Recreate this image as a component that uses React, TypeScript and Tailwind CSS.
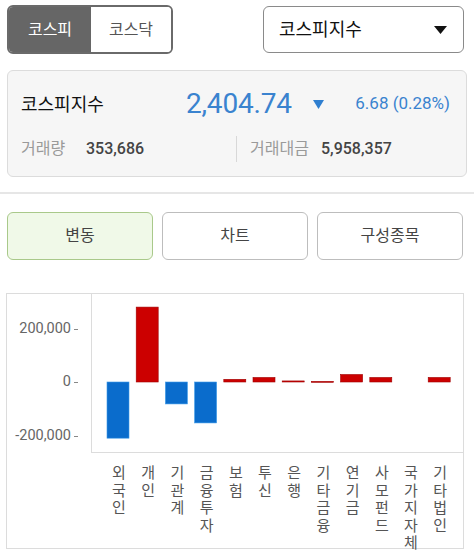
import React from 'react';

const bars = [
  { label: '외국인', value: -210000 },
  { label: '개인', value: 280000 },
  { label: '기관계', value: -82000 },
  { label: '금융투자', value: -153000 },
  { label: '보험', value: 10000 },
  { label: '투신', value: 17000 },
  { label: '은행', value: 4000 },
  { label: '기타금융', value: 2500 },
  { label: '연기금', value: 28000 },
  { label: '사모펀드', value: 17000 },
  { label: '국가지자체', value: 0 },
  { label: '기타법인', value: 17000 },
];

const ZERO = 88;
const SCALE = 53.5 / 200000;
const STEP = 29.2;
const FIRST = 26;
const BAR_W = 22;

function Chart() {
  return (
    <div className="mx-[6px] mt-[33px] h-[256px] w-[458px] border border-[#dcdcdc] bg-white">
      <div className="flex">
        <div className="relative h-[159px] w-[85px] text-[14.5px] text-[#666]">
          {[
            { t: '200,000', y: 35 },
            { t: '0', y: 88 },
            { t: '-200,000', y: 142 },
          ].map((l) => (
            <div key={l.t} className="absolute right-[13px] flex items-center gap-[3px]" style={{ top: l.y - 10 }}>
              <span className="leading-[20px]">{l.t}</span>
              <span className="h-px w-[4px] bg-[#888]" />
            </div>
          ))}
        </div>
        <div className="h-[159px] flex-1 border-b border-l border-[#dcdcdc]">
          <svg width="371" height="158">
            {bars.map((b, i) => {
              const x = FIRST + i * STEP - BAR_W / 2;
              const h = Math.abs(b.value) * SCALE;
              if (h === 0) return null;
              const y = b.value >= 0 ? ZERO - h : ZERO;
              const pos = b.value >= 0;
              return (
                <rect
                  key={b.label}
                  x={x}
                  y={y}
                  width={BAR_W}
                  height={Math.max(h, 1)}
                  fill={pos ? '#cc0000' : '#0a6ccc'}
                  stroke={pos ? '#a00000' : '#3d9ae8'}
                  strokeWidth={0.6}
                />
              );
            })}
          </svg>
        </div>
      </div>
      <div className="relative ml-[86px] h-[90px]">
        {bars.map((b, i) => (
          <div
            key={b.label}
            className="absolute top-[12px] flex w-[20px] flex-col items-center text-[15px] leading-[17.5px] text-[#555]"
            style={{ left: FIRST + i * STEP - 10 }}
          >
            {b.label.split('').map((c, j) => (
              <span key={j}>{c}</span>
            ))}
          </div>
        ))}
      </div>
    </div>
  );
}

export default function App() {
  return (
    <div className="h-[552px] w-[474px] overflow-hidden bg-white font-['Roboto','Noto_Sans_CJK_KR',sans-serif]">
      <div className="flex items-start justify-between px-[7px] pt-[5px]">
        <div className="flex h-[49px] w-[166px] overflow-hidden rounded-[6px] border-2 border-[#6a6a6a] text-[16px]">
          <div className="flex w-[82px] items-center justify-center bg-[#666] text-white">코스피</div>
          <div className="flex flex-1 items-center justify-center bg-white text-[#555]">코스닥</div>
        </div>
        <div className="mr-[3px] mt-[1px] flex h-[47px] w-[201px] items-center justify-between rounded-[6px] border-[1.5px] border-[#8a8a8a] pl-[15px] pr-[16px]">
          <span className="text-[18px] text-[#111]">코스피지수</span>
          <svg width="13" height="8" viewBox="0 0 13 8">
            <path d="M0 0 H13 L6.5 8 Z" fill="#111" />
          </svg>
        </div>
      </div>

      <div className="mx-[7px] mt-[16px] h-[107px] rounded-[6px] border border-[#dcdcdc] bg-[#f6f6f6] pl-[13px] pr-[16px]">
        <div className="flex h-[64px] items-center pt-[2px]">
          <span className="w-[165px] text-[18px] text-[#111]">코스피지수</span>
          <span className="text-[28px] tracking-[-0.2px] text-[#3a83cf]">2,404.74</span>
          <svg className="ml-[21px] mt-[1px]" width="11" height="9" viewBox="0 0 11 9">
            <path d="M0 0 H11 L5.5 9 Z" fill="#2f7fd0" />
          </svg>
          <span className="ml-auto text-[17px] text-[#3a83cf]">6.68 (0.28%)</span>
        </div>
        <div className="flex h-[28px] items-center">
          <div className="flex w-[215px] items-center">
            <span className="w-[65px] text-[16px] text-[#9a9a9a]">거래량</span>
            <span className="text-[16px] font-medium text-[#444]">353,686</span>
          </div>
          <div className="h-[26px] w-px bg-[#d8d8d8]" />
          <div className="ml-[13px] flex items-center">
            <span className="w-[71px] text-[16px] text-[#9a9a9a]">거래대금</span>
            <span className="text-[16px] font-medium text-[#444]">5,958,357</span>
          </div>
        </div>
      </div>

      <div className="mt-[15px] h-[2px] w-full bg-[#e6e6e6]" />

      <div className="mt-[18px] flex gap-[9px] px-[7px] text-[16px] text-[#444]">
        <div className="flex h-[48px] w-[146px] items-center justify-center rounded-[6px] border-[1.5px] border-[#a9c98a] bg-[#f0f9e8]">변동</div>
        <div className="flex h-[48px] w-[146px] items-center justify-center rounded-[6px] border-[1.5px] border-[#bdbdbd] bg-white">차트</div>
        <div className="flex h-[48px] w-[146px] items-center justify-center rounded-[6px] border-[1.5px] border-[#bdbdbd] bg-white">구성종목</div>
      </div>

      <Chart />
    </div>
  );
}
